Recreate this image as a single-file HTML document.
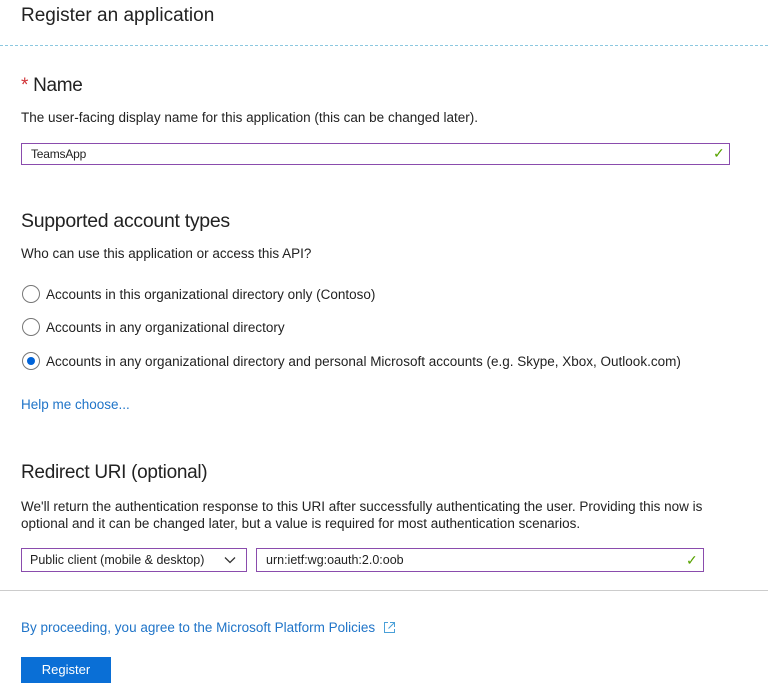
<!DOCTYPE html>
<html><head><meta charset="utf-8"><style>
body{margin:0;width:768px;height:690px;background:#fff;font-family:"Liberation Sans",sans-serif;color:#222;position:relative;overflow:hidden}
.a{position:absolute;white-space:nowrap}
.t{font-size:13.5px}
.box{position:absolute;border:1.5px solid #8a4cad;box-sizing:border-box;background:#fff}
.chk{position:absolute;color:#57a300;font-size:14px}
.r{position:absolute;left:22px;width:18px;height:18px;border:1px solid #777;border-radius:50%;box-sizing:border-box}
.blue{color:#1f74c8}
</style></head><body>
<div class="a" style="left:21px;top:5px;font-size:19px">Register an application</div>
<div class="a" style="left:0;top:45px;width:768px;border-top:1px dashed #8cc8e0"></div>
<div class="a" style="left:21px;top:75px;font-size:19px;letter-spacing:-0.3px"><span style="color:#d13438">*</span> Name</div>
<div class="a t" style="left:21px;top:110px">The user-facing display name for this application (this can be changed later).</div>
<div class="box" style="left:21px;top:143px;width:709px;height:22px"></div>
<div class="a" style="left:31px;top:147px;font-size:12px;letter-spacing:-0.2px">TeamsApp</div>
<div class="chk" style="left:713px;top:145px">✓</div>
<div class="a" style="left:21px;top:210px;font-size:19.5px;letter-spacing:-0.3px">Supported account types</div>
<div class="a t" style="left:21px;top:246px">Who can use this application or access this API?</div>
<div class="r" style="top:285px"></div>
<div class="a t" style="left:46px;top:287px">Accounts in this organizational directory only (Contoso)</div>
<div class="r" style="top:318px"></div>
<div class="a t" style="left:46px;top:320px">Accounts in any organizational directory</div>
<div class="r" style="top:352px"><div style="position:absolute;left:4px;top:4px;width:8px;height:8px;border-radius:50%;background:#0063d8"></div></div>
<div class="a t" style="left:46px;top:354px">Accounts in any organizational directory and personal Microsoft accounts (e.g. Skype, Xbox, Outlook.com)</div>
<div class="a t blue" style="left:21px;top:397px">Help me choose...</div>
<div class="a" style="left:21px;top:462px;font-size:19px;letter-spacing:-0.3px">Redirect URI (optional)</div>
<div class="a t" style="left:21px;top:499px">We'll return the authentication response to this URI after successfully authenticating the user. Providing this now is</div>
<div class="a t" style="left:21px;top:516px">optional and it can be changed later, but a value is required for most authentication scenarios.</div>
<div class="box" style="left:21px;top:548px;width:226px;height:24px"></div>
<div class="a" style="left:30px;top:553px;font-size:12.5px">Public client (mobile &amp; desktop)</div>
<svg class="a" style="left:224px;top:556px" width="12" height="8"><path d="M1 1.5L6 6.5L11 1.5" fill="none" stroke="#333" stroke-width="1.3"/></svg>
<div class="box" style="left:256px;top:548px;width:448px;height:24px"></div>
<div class="a" style="left:266px;top:553px;font-size:12.5px">urn:ietf:wg:oauth:2.0:oob</div>
<div class="chk" style="left:686px;top:552px">✓</div>
<div class="a" style="left:0;top:590px;width:768px;border-top:1px solid #ccc"></div>
<div class="a t blue" style="left:21px;top:620px">By proceeding, you agree to the Microsoft Platform Policies</div>
<svg class="a" style="left:383px;top:621px" width="13" height="13"><path d="M5 1.5H1.5V11.5H11.5V8M7 1.5H11.5V6M11.5 1.5L5.5 7.5" fill="none" stroke="#4aa0d8" stroke-width="1"/></svg>
<div class="a" style="left:21px;top:657px;width:90px;height:26px;background:#0a6fd6;color:#fff;font-size:13px;text-align:center;line-height:26px">Register</div>
</body></html>
